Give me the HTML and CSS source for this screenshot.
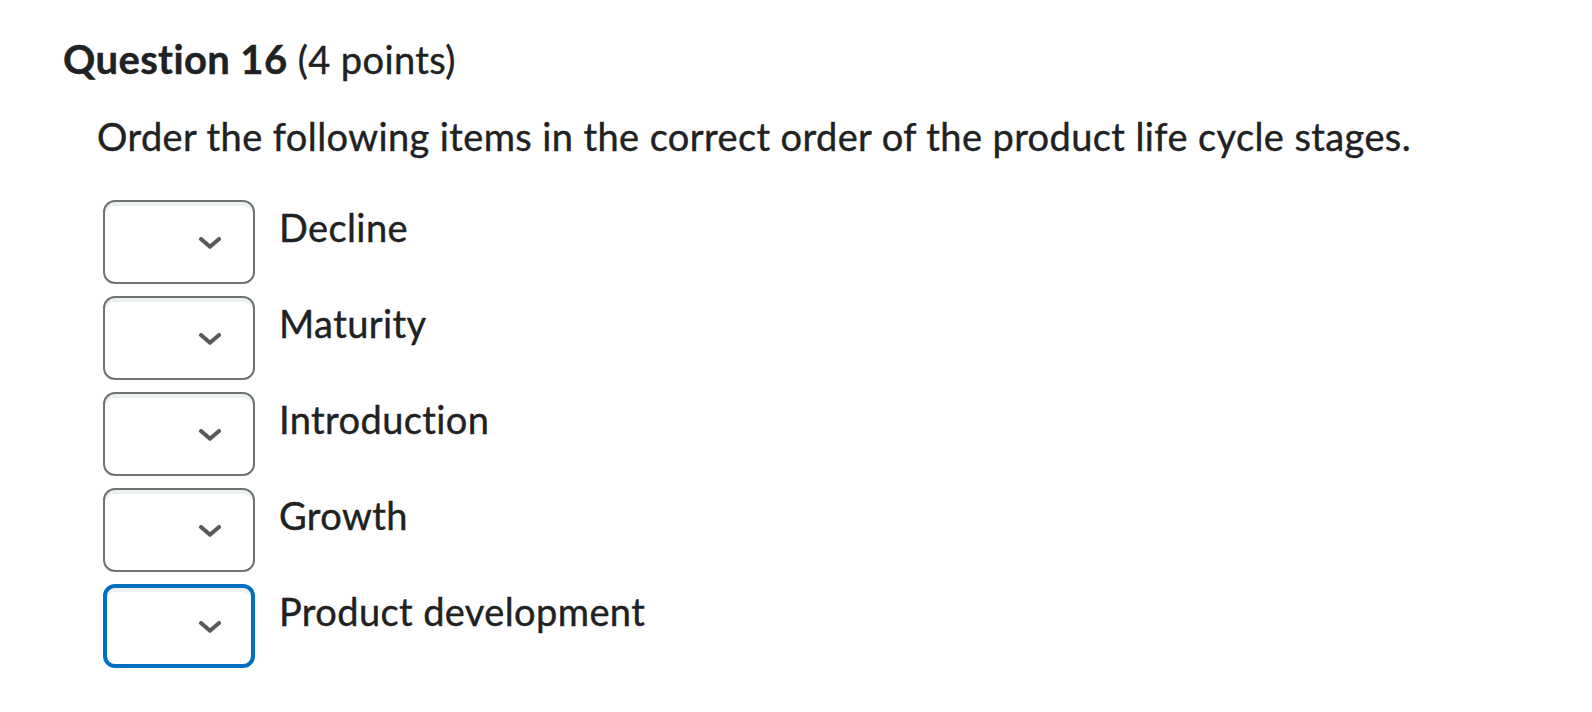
FILE: index.html
```
<!DOCTYPE html>
<html lang="en">
<head>
  <meta charset="UTF-8" />
  <meta name="viewport" content="width=device-width, initial-scale=1.0" />
  <title>Question 16</title>
  <link rel="stylesheet" href="styles.css">
</head>
<body>
  <main class="question">
    <h2 class="question-title"><strong>Question 16</strong> <span class="points">(4 points)</span></h2>
    <p class="question-text">Order the following items in the correct order of the product life cycle stages.</p>

    <div class="items">
      <div class="item">
        <button type="button" class="order-select" aria-label="Order for Decline">
          <svg class="chevron" viewBox="0 0 22 12"><path d="M2 2l9 7.8L20 2" /></svg>
        </button>
        <span class="item-label">Decline</span>
      </div>
      <div class="item">
        <button type="button" class="order-select" aria-label="Order for Maturity">
          <svg class="chevron" viewBox="0 0 22 12"><path d="M2 2l9 7.8L20 2" /></svg>
        </button>
        <span class="item-label">Maturity</span>
      </div>
      <div class="item">
        <button type="button" class="order-select" aria-label="Order for Introduction">
          <svg class="chevron" viewBox="0 0 22 12"><path d="M2 2l9 7.8L20 2" /></svg>
        </button>
        <span class="item-label">Introduction</span>
      </div>
      <div class="item">
        <button type="button" class="order-select" aria-label="Order for Growth">
          <svg class="chevron" viewBox="0 0 22 12"><path d="M2 2l9 7.8L20 2" /></svg>
        </button>
        <span class="item-label">Growth</span>
      </div>
      <div class="item">
        <button type="button" class="order-select active" aria-label="Order for Product development">
          <svg class="chevron" viewBox="0 0 22 12"><path d="M2 2l9 7.8L20 2" /></svg>
        </button>
        <span class="item-label">Product development</span>
      </div>
    </div>
  </main>
</body>
</html>
```

FILE: styles.css
```
* {
  box-sizing: border-box;
}
body {
  font-family: Lato, "Open Sans", sans-serif;
  font-size: 38px;
  line-height: 56px;
  letter-spacing: 0.39px;
  -webkit-text-stroke: 0.4px #202122;
  margin: 0;
  background-color: #fff;
  color: #202122;
}
.question {
  padding: 31px 63px;
}
.question-title {
  margin: 0;
  font-size: 38px;
  font-weight: 400;
}
.question-title strong {
  font-size: 40px;
  font-weight: 700;
}
.question-text {
  margin: 21px 0 0 34px;
}
.items {
  display: flex;
  flex-direction: column;
  gap: 12px;
  margin: 36px 0 0 40px;
}
.item {
  display: flex;
  align-items: flex-start;
  gap: 24px;
}
.item-label {
  line-height: 54px;
}
.order-select {
  display: flex;
  align-items: center;
  justify-content: flex-end;
  width: 152px;
  height: 84px;
  padding: 2px 32px 0 0;
  background-color: #fff;
  border: 2px solid #6e7376;
  border-radius: 12px;
  box-shadow: inset 0 4px 0 #eff0f2;
}
.order-select.active {
  padding-right: 30px;
  border: 4px solid #006fbf;
}
.chevron {
  width: 22px;
  height: 12px;
  fill: none;
  stroke: #565a5c;
  stroke-width: 4;
  stroke-linecap: round;
  stroke-linejoin: round;
}
```
